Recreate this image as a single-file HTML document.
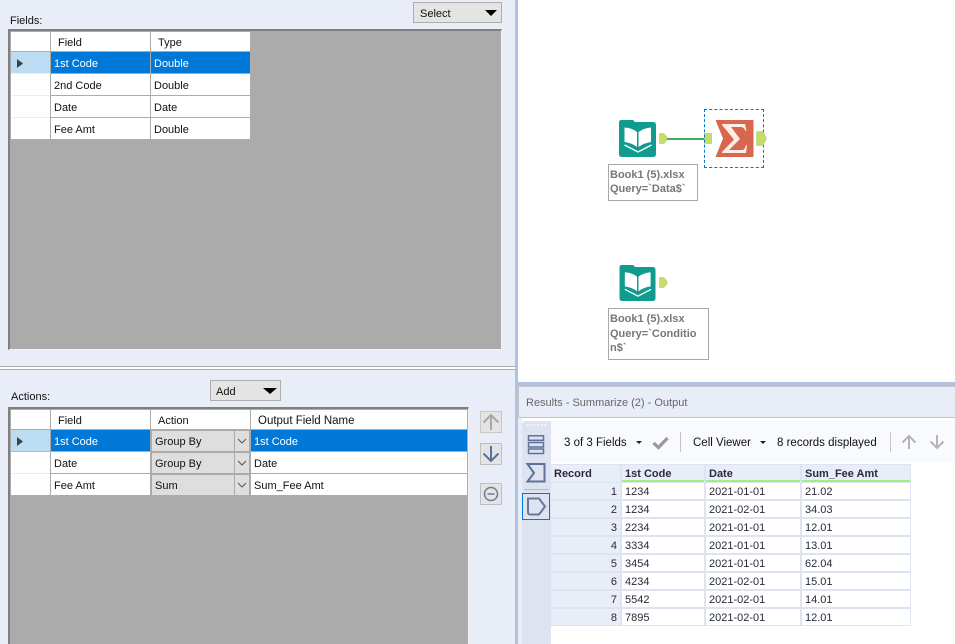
<!DOCTYPE html>
<html><head><meta charset="utf-8">
<style>
html,body{margin:0;padding:0;width:955px;height:644px;overflow:hidden;background:#e9edf8;}
body{position:relative;font-family:"Liberation Sans",sans-serif;font-size:11px;color:#111;}
div{position:absolute;box-sizing:border-box;white-space:nowrap;}
.c{background:#fff;line-height:25px;padding-left:3px;}
.h{background:#fff;line-height:23px;padding-left:7px;}
.sel{background:#0078d7;color:#fff;}
.g{background:#dedede;line-height:23px;padding-left:3px;}
.r{font-size:11px;line-height:19px;padding-left:3px;background:#fff;color:#2a2a3a;}
.rn{background:#e9edf8;text-align:right;padding-right:3px;line-height:19px;color:#2a2a3a;}
.rh{background:#e9edf8;font-weight:bold;line-height:18px;padding-left:3px;color:#2a2a3a;}
.gl{background:#a0f080;height:2px;top:480px;}
svg{position:absolute;overflow:visible;}
</style></head><body>

<!-- Top panel -->
<div style="left:10px;top:15px;line-height:13px;">Fields:</div>
<div style="left:413px;top:2px;width:89px;height:21px;background:#e4e4e4;border:1px solid #adadad;line-height:23px;padding-left:6px;">Select
<svg style="left:71px;top:7px" width="12" height="6"><path d="M0 0H12L6 6Z" fill="#000"/></svg></div>

<div style="left:8px;top:29px;width:494px;height:321px;background:#ababab;border-top:2px solid #808080;border-left:2px solid #808080;border-right:1px solid #f4f4f4;border-bottom:1px solid #f4f4f4;"></div>
<div style="left:11px;top:32px;width:39px;height:19px;background:#fff;"></div>
<div class="h" style="left:51px;top:32px;width:99px;height:19px;">Field</div>
<div class="h" style="left:151px;top:32px;width:99px;height:19px;">Type</div>

<div style="left:11px;top:52px;width:39px;height:21px;background:#bbdcf2;"></div>
<div class="c sel" style="left:51px;top:52px;width:99px;height:21px;">1st Code</div>
<div class="c sel" style="left:151px;top:52px;width:99px;height:21px;">Double</div>
<div style="left:11px;top:74px;width:39px;height:21px;background:#fff;"></div>
<div class="c" style="left:51px;top:74px;width:99px;height:21px;">2nd Code</div>
<div class="c" style="left:151px;top:74px;width:99px;height:21px;">Double</div>
<div style="left:11px;top:96px;width:39px;height:21px;background:#fff;"></div>
<div class="c" style="left:51px;top:96px;width:99px;height:21px;">Date</div>
<div class="c" style="left:151px;top:96px;width:99px;height:21px;">Date</div>
<div style="left:11px;top:118px;width:39px;height:21px;background:#fff;"></div>
<div class="c" style="left:51px;top:118px;width:99px;height:21px;">Fee Amt</div>
<div class="c" style="left:151px;top:118px;width:99px;height:21px;">Double</div>
<div style="left:11px;top:73px;width:39px;height:1px;background:#eee;"></div>
<div style="left:11px;top:95px;width:39px;height:1px;background:#eee;"></div>
<div style="left:11px;top:117px;width:39px;height:1px;background:#eee;"></div>
<svg style="left:17px;top:59px" width="6" height="9"><path d="M0 0L6 4.5L0 9Z" fill="#404040"/></svg>

<!-- splitter -->
<div style="left:0;top:366px;width:515px;height:4px;background:#fff;border-top:1px solid #a8a8a8;border-bottom:1px solid #a8a8a8;"></div>

<!-- Actions -->
<div style="left:11px;top:391px;line-height:13px;">Actions:</div>
<div style="left:210px;top:380px;width:71px;height:21px;background:#e4e4e4;border:1px solid #adadad;line-height:23px;padding-left:5px;">Add
<svg style="left:52px;top:7px" width="14" height="6"><path d="M0 0H14L7 6Z" fill="#000"/></svg></div>

<div style="left:8px;top:407px;width:461px;height:237px;background:#ababab;border-top:2px solid #808080;border-left:2px solid #808080;border-right:1px solid #f4f4f4;"></div>
<div style="left:11px;top:410px;width:39px;height:19px;background:#fff;"></div>
<div class="h" style="left:51px;top:410px;width:99px;height:19px;">Field</div>
<div class="h" style="left:151px;top:410px;width:99px;height:19px;">Action</div>
<div class="h" style="left:251px;top:410px;width:216px;height:19px;font-size:11.5px;">Output Field Name</div>

<div style="left:11px;top:430px;width:39px;height:21px;background:#bbdcf2;"></div>
<div class="c sel" style="left:51px;top:430px;width:99px;height:21px;">1st Code</div>
<div class="g" style="left:152px;top:431px;width:82px;height:20px;">Group By</div>
<div class="g" style="left:235px;top:431px;width:14px;height:20px;"></div>
<div class="c sel" style="left:251px;top:430px;width:216px;height:21px;">1st Code</div>

<div style="left:11px;top:452px;width:39px;height:21px;background:#fff;"></div>
<div class="c" style="left:51px;top:452px;width:99px;height:21px;">Date</div>
<div class="g" style="left:152px;top:453px;width:82px;height:20px;">Group By</div>
<div class="g" style="left:235px;top:453px;width:14px;height:20px;"></div>
<div class="c" style="left:251px;top:452px;width:216px;height:21px;">Date</div>

<div style="left:11px;top:474px;width:39px;height:21px;background:#fff;"></div>
<div class="c" style="left:51px;top:474px;width:99px;height:21px;">Fee Amt</div>
<div class="g" style="left:152px;top:475px;width:82px;height:20px;">Sum</div>
<div class="g" style="left:235px;top:475px;width:14px;height:20px;"></div>
<div class="c" style="left:251px;top:474px;width:216px;height:21px;">Sum_Fee Amt</div>
<div style="left:11px;top:451px;width:39px;height:1px;background:#bbb;"></div>
<div style="left:11px;top:473px;width:39px;height:1px;background:#eee;"></div>
<svg style="left:17px;top:437px" width="6" height="9"><path d="M0 0L6 4.5L0 9Z" fill="#404040"/></svg>
<svg style="left:236px;top:438px" width="12" height="6"><path d="M2 1L6 5L10 1" fill="none" stroke="#555"/></svg>
<svg style="left:236px;top:460px" width="12" height="6"><path d="M2 1L6 5L10 1" fill="none" stroke="#555"/></svg>
<svg style="left:236px;top:482px" width="12" height="6"><path d="M2 1L6 5L10 1" fill="none" stroke="#555"/></svg>

<!-- side buttons -->
<div style="left:480px;top:411px;width:22px;height:22px;background:#e4e4e4;border:1px solid #c8c8c8;"></div>
<svg style="left:480px;top:411px" width="22" height="22"><path d="M11 19V4M3.5 11.5L11 4L18.5 11.5" fill="none" stroke="#a8a8a8" stroke-width="2"/></svg>
<div style="left:480px;top:443px;width:22px;height:22px;background:#e4e4e4;border:1px solid #c0c0c0;"></div>
<svg style="left:480px;top:443px" width="22" height="22"><path d="M11 3V18M3.5 10.5L11 18L18.5 10.5" fill="none" stroke="#5a7099" stroke-width="2"/></svg>
<div style="left:480px;top:483px;width:22px;height:22px;background:#e4e4e4;border:1px solid #c0c0c0;"></div>
<svg style="left:480px;top:483px" width="22" height="22"><circle cx="11" cy="11" r="6.5" fill="none" stroke="#6a7c9c" stroke-width="1.5"/><path d="M7.5 11H14.5" stroke="#6a7c9c" stroke-width="1.5"/></svg>

<!-- vertical splitter -->
<div style="left:515px;top:0;width:3px;height:644px;background:#b1c1e1;"></div>

<!-- Canvas -->
<div style="left:518px;top:0;width:437px;height:382px;background:#fff;"></div>
<div style="left:518px;top:382px;width:437px;height:4px;background:#b1c1e1;"></div>

<!-- Input tool 1 -->
<svg style="left:619px;top:120px" width="37" height="37" viewBox="0 0 37 37">
<path d="M2.5 0H14L16 2H34Q37 2 37 5V34Q37 37 34 37H3Q0 37 0 34V2.5Q0 0 2.5 0Z" fill="#0f9b8e"/>
<path d="M5.5 7.5Q13 8 18 12V27Q13 23 5.5 22Z" fill="#fff"/>
<path d="M19.5 12Q25 8 32 7.5V22Q25 23 19.5 27Z" fill="#fff"/>
<path d="M5.5 25L19 32L32.5 25" fill="none" stroke="#fff" stroke-width="1.4"/>
</svg>
<svg style="left:659px;top:133px" width="9" height="11"><path d="M0.5 0.5H5L8 4V7L5 10.5H0.5Z" fill="#c5dc6b" stroke="#a8c870" stroke-width=".5"/></svg>
<div style="left:667px;top:138px;width:38px;height:2px;background:#3fae5c;"></div>
<div style="left:704px;top:133px;width:8px;height:11px;background:#c5dc6b;"></div>
<div style="left:704px;top:109px;width:60px;height:59px;border:1px dashed #0078d7;"></div>
<svg style="left:715px;top:120px" width="39" height="37" viewBox="0 0 39 37">
<path d="M0.5 0H38.5V37H0.5L8 18.5Z" fill="#d9674e"/>
<path d="M7 4H30L31.5 11H30.5Q29 7 26 7H16L25 19L14 30H27Q30 30 31 25H32L31 33H7V32L19 19.5L7 5Z" fill="#fbeee9"/>
</svg>
<svg style="left:756px;top:131px" width="12" height="15"><path d="M0.5 0.5H7L10.5 7.5L7 14.5H0.5Z" fill="#c5dc6b" stroke="#a8c870" stroke-width=".5"/></svg>

<div style="left:608px;top:164px;width:90px;height:37px;background:#fff;border:1px solid #a8a8a8;font-weight:bold;color:#777;line-height:14px;padding:3px 1px;">Book1 (5).xlsx<br>Query=`Data$`</div>

<!-- Input tool 2 -->
<svg style="left:619px;top:265px" width="37" height="36" viewBox="0 0 37 37">
<path d="M2.5 0H14L16 2H34Q37 2 37 5V34Q37 37 34 37H3Q0 37 0 34V2.5Q0 0 2.5 0Z" fill="#0f9b8e"/>
<path d="M5.5 7.5Q13 8 18 12V27Q13 23 5.5 22Z" fill="#fff"/>
<path d="M19.5 12Q25 8 32 7.5V22Q25 23 19.5 27Z" fill="#fff"/>
<path d="M5.5 25L19 32L32.5 25" fill="none" stroke="#fff" stroke-width="1.4"/>
</svg>
<svg style="left:659px;top:277px" width="9" height="11"><path d="M0.5 0.5H5L8 4V7L5 10.5H0.5Z" fill="#c5dc6b" stroke="#a8c870" stroke-width=".5"/></svg>
<div style="left:608px;top:308px;width:101px;height:52px;background:#fff;border:1px solid #a8a8a8;font-weight:bold;color:#777;line-height:14.5px;padding:3px 1px;">Book1 (5).xlsx<br>Query=`Conditio<br>n$`</div>

<!-- Results -->
<div style="left:518px;top:386px;width:437px;height:32px;background:#e9edf8;border:1px solid #c4c4c4;border-right:none;line-height:32px;padding-left:7px;color:#666;">Results - Summarize (2) - Output</div>
<div style="left:518px;top:418px;width:437px;height:226px;background:#fff;"></div>
<div style="left:518px;top:418px;width:4px;height:226px;background:#e9edf8;"></div>
<div style="left:522px;top:421px;width:29px;height:223px;background:#dde3f0;border-radius:3px 0 0 0;"></div>
<div style="left:551px;top:421px;width:404px;height:42px;background:#f8fafe;"></div>

<svg style="left:526px;top:424px" width="22" height="4"><path d="M1 1H21" stroke="#fff" stroke-width="1.4" stroke-dasharray="1.5 2"/></svg>
<svg style="left:527px;top:435px" width="18" height="20" fill="none" stroke="#5f7196" stroke-width="1.5"><rect x="1.5" y="0.8" width="15" height="4.5"/><rect x="1.5" y="7.5" width="15" height="4.5"/><rect x="1.5" y="14" width="15" height="4.5"/></svg>
<svg style="left:526px;top:463px" width="20" height="20" fill="none" stroke="#5f7196" stroke-width="2"><path d="M1.5 1H18.5V18.5H1.5L8 10Z"/></svg>
<div style="left:524px;top:489px;width:25px;height:1px;background:#b8b8b8;"></div>
<div style="left:522px;top:493px;width:28px;height:27px;border:1px solid #0078d7;background:#dde3f0;"></div>
<svg style="left:527px;top:497px" width="20" height="19" fill="none" stroke="#6a7898" stroke-width="2"><path d="M1 1.5H12L18 9.5L12 17.5H3Q1 17.5 1 15Z"/></svg>

<div style="left:564px;top:436px;line-height:15px;font-size:11.5px;">3 of 3 Fields</div>
<svg style="left:636px;top:441px" width="6" height="3"><path d="M0 0H6L3 3Z" fill="#222"/></svg>
<svg style="left:652px;top:436px" width="17" height="14"><path d="M1.5 7L6.5 11.5L15.5 2" fill="none" stroke="#9a9a9a" stroke-width="3.2"/></svg>
<div style="left:680px;top:432px;width:1px;height:20px;background:#c4c4c4;"></div>
<div style="left:693px;top:436px;line-height:15px;font-size:11.5px;">Cell Viewer</div>
<svg style="left:760px;top:441px" width="6" height="3"><path d="M0 0H6L3 3Z" fill="#222"/></svg>
<div style="left:777px;top:436px;line-height:15px;font-size:11.5px;">8 records displayed</div>
<div style="left:890px;top:432px;width:1px;height:20px;background:#c4c4c4;"></div>
<svg style="left:901px;top:434px" width="16" height="16" fill="none" stroke="#b4b4b4" stroke-width="2"><path d="M8 15V2M1.5 8.5L8 2L14.5 8.5"/></svg>
<svg style="left:929px;top:434px" width="16" height="16" fill="none" stroke="#b4b4b4" stroke-width="2"><path d="M8 1V14M1.5 7.5L8 14L14.5 7.5"/></svg>

<!-- Results grid -->
<div style="left:551px;top:464px;width:360px;height:162px;background:#dde3f0;"></div>
<div class="rh" style="left:551px;top:465px;width:69px;height:17px;">Record</div>
<div class="rh" style="left:622px;top:465px;width:82px;height:17px;">1st Code</div>
<div class="rh" style="left:706px;top:465px;width:94px;height:17px;">Date</div>
<div class="rh" style="left:802px;top:465px;width:108px;height:17px;">Sum_Fee Amt</div>
<div class="gl" style="left:622px;width:82px;"></div>
<div class="gl" style="left:706px;width:94px;"></div>
<div class="gl" style="left:802px;width:108px;"></div>

<div class="rn" style="left:551px;top:483px;width:69px;height:16px;">1</div><div class="r" style="left:622px;top:483px;width:82px;height:16px;">1234</div><div class="r" style="left:706px;top:483px;width:94px;height:16px;">2021-01-01</div><div class="r" style="left:802px;top:483px;width:108px;height:16px;">21.02</div>
<div class="rn" style="left:551px;top:501px;width:69px;height:16px;">2</div><div class="r" style="left:622px;top:501px;width:82px;height:16px;">1234</div><div class="r" style="left:706px;top:501px;width:94px;height:16px;">2021-02-01</div><div class="r" style="left:802px;top:501px;width:108px;height:16px;">34.03</div>
<div class="rn" style="left:551px;top:519px;width:69px;height:16px;">3</div><div class="r" style="left:622px;top:519px;width:82px;height:16px;">2234</div><div class="r" style="left:706px;top:519px;width:94px;height:16px;">2021-01-01</div><div class="r" style="left:802px;top:519px;width:108px;height:16px;">12.01</div>
<div class="rn" style="left:551px;top:537px;width:69px;height:16px;">4</div><div class="r" style="left:622px;top:537px;width:82px;height:16px;">3334</div><div class="r" style="left:706px;top:537px;width:94px;height:16px;">2021-01-01</div><div class="r" style="left:802px;top:537px;width:108px;height:16px;">13.01</div>
<div class="rn" style="left:551px;top:555px;width:69px;height:16px;">5</div><div class="r" style="left:622px;top:555px;width:82px;height:16px;">3454</div><div class="r" style="left:706px;top:555px;width:94px;height:16px;">2021-01-01</div><div class="r" style="left:802px;top:555px;width:108px;height:16px;">62.04</div>
<div class="rn" style="left:551px;top:573px;width:69px;height:16px;">6</div><div class="r" style="left:622px;top:573px;width:82px;height:16px;">4234</div><div class="r" style="left:706px;top:573px;width:94px;height:16px;">2021-02-01</div><div class="r" style="left:802px;top:573px;width:108px;height:16px;">15.01</div>
<div class="rn" style="left:551px;top:591px;width:69px;height:16px;">7</div><div class="r" style="left:622px;top:591px;width:82px;height:16px;">5542</div><div class="r" style="left:706px;top:591px;width:94px;height:16px;">2021-02-01</div><div class="r" style="left:802px;top:591px;width:108px;height:16px;">14.01</div>
<div class="rn" style="left:551px;top:609px;width:69px;height:16px;">8</div><div class="r" style="left:622px;top:609px;width:82px;height:16px;">7895</div><div class="r" style="left:706px;top:609px;width:94px;height:16px;">2021-02-01</div><div class="r" style="left:802px;top:609px;width:108px;height:16px;">12.01</div>

</body></html>
